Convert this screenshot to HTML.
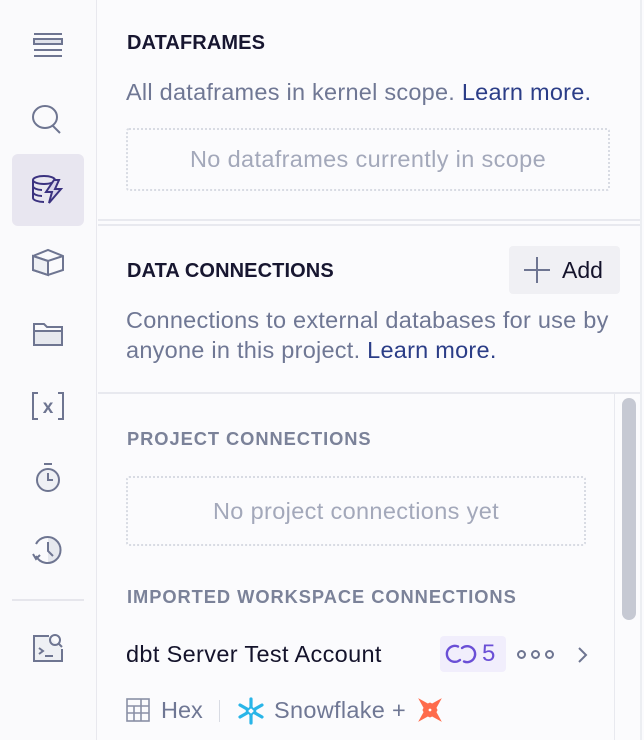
<!DOCTYPE html>
<html><head><meta charset="utf-8"><style>
*{box-sizing:border-box;margin:0;padding:0}
body{width:644px;height:740px;overflow:hidden;background:#fbfbfd;font-family:"Liberation Sans",sans-serif;position:relative}
.side{position:absolute;left:0;top:0;width:97px;height:740px;background:#fafafc;border-right:1px solid #e8e8ee}
.ic{position:absolute;left:12px;width:72px;height:72px;display:flex;align-items:center;justify-content:center}
.abs{position:absolute;white-space:nowrap}
.h{font-weight:bold;font-size:20px;color:#171630;letter-spacing:0.1px}
.t{font-size:23.5px;color:#6f7794;line-height:30px;letter-spacing:0.25px}
.t a{color:#2b3d87;text-decoration:none}
.box{border:2px dotted #d8dbe3;border-radius:3px;color:#a3a8ba;font-size:23.5px;letter-spacing:0.35px;display:flex;align-items:center;justify-content:center}
.sub{font-weight:bold;font-size:18.3px;color:#7b8299;letter-spacing:0.95px}
.line{position:absolute;left:98px;height:2px;background:#e8e9ef}
</style></head><body>
<div class="side">
 <div class="ic" style="top:10px"><svg width="34" height="34" viewBox="0 0 34 34" fill="none" stroke="#6e7591" stroke-width="2"><line x1="3" y1="5" x2="31" y2="5"/><rect x="3" y="10" width="28" height="5" fill="#e0e2ea"/><line x1="3" y1="21" x2="31" y2="21"/><line x1="3" y1="27" x2="31" y2="27"/></svg></div>
 <div class="ic" style="top:84px"><svg width="36" height="36" viewBox="0 0 36 36" fill="none" stroke="#6e7591" stroke-width="2"><ellipse cx="15" cy="15" rx="12" ry="11"/><line x1="23" y1="24" x2="30" y2="31"/></svg></div>
 <div class="ic" style="top:154px;background:#e8e6f0;border-radius:6px"><svg width="36" height="36" viewBox="0 0 36 36" fill="none" stroke="#3b3280" stroke-width="2"><ellipse cx="14" cy="8" rx="11" ry="4"/><path d="M3 8v18c0 2 5 4 11 4M3 14c0 2 4 4 9 4M3 20c0 2 4 4 9 4"/><path d="M24 8l-8 12h6l-3 11 12-14h-6l4-9z" fill="#d8d4ea"/></svg></div>
 <div class="ic" style="top:226px"><svg width="36" height="34" viewBox="0 0 36 34" fill="none" stroke="#6e7591" stroke-width="2"><path d="M3 11L18 5l15 6v14l-15 5-15-5z"/><path d="M3 11l15 5 15-5M18 16v14"/><path d="M3 11l15 5v14l-15-5z" fill="#eef0f4"/></svg></div>
 <div class="ic" style="top:298px"><svg width="34" height="30" viewBox="0 0 34 30" fill="none" stroke="#6e7591" stroke-width="2"><path d="M3 5h10l3 3h15v18H3z"/><rect x="3" y="12" width="28" height="14" fill="#e6e8ee"/></svg></div>
 <div class="ic" style="top:370px"><svg width="36" height="34" viewBox="0 0 36 34" fill="none" stroke="#6e7591" stroke-width="2"><path d="M8 4H3v26h5M28 4h5v26h-5"/><text x="18" y="24" font-family="Liberation Sans" font-weight="bold" font-size="19" fill="#6e7591" stroke="none" text-anchor="middle">x</text></svg></div>
 <div class="ic" style="top:442px"><svg width="34" height="34" viewBox="0 0 34 34" fill="none" stroke="#6e7591" stroke-width="2"><line x1="13" y1="3" x2="21" y2="3"/><circle cx="17" cy="19" r="11" fill="#eef0f4"/><path d="M17 12v7h5"/></svg></div>
 <div class="ic" style="top:514px"><svg width="36" height="36" viewBox="0 0 36 36" fill="none" stroke="#6e7591" stroke-width="2"><path d="M18 5a13 13 0 0 1 0 26z" fill="#e6e8ee" stroke="none"/><path d="M6 24A13 13 0 1 0 6 12"/><path d="M18 10v9l5 5"/><path d="M3 22l3 5 4-4"/></svg></div>
 <div style="position:absolute;left:12px;top:599px;width:72px;height:2px;background:#e6e6ec"></div>
 <div class="ic" style="top:612px"><svg width="34" height="34" viewBox="0 0 34 34" fill="none" stroke="#6e7591" stroke-width="2"><path d="M18 5H3v25h28V18" fill="#eef0f4"/><path d="M8 17l4 3-4 3M14 25h8"/><circle cx="24" cy="9" r="5"/><line x1="28" y1="13" x2="31" y2="16"/></svg></div>
</div>

<div class="abs" style="left:640px;top:0;width:2px;height:740px;background:#eceef2"></div>
<div class="abs h" style="left:127px;top:32px">DATAFRAMES</div>
<div class="abs t" style="left:126px;top:77px">All dataframes in kernel scope. <a>Learn more.</a></div>
<div class="abs box" style="left:126px;top:128px;width:484px;height:63px">No dataframes currently in scope</div>
<div class="line" style="top:219px;width:542px"></div>
<div class="line" style="top:224px;width:542px"></div>
<div class="abs h" style="left:127px;top:260px">DATA CONNECTIONS</div>
<div class="abs" style="left:509px;top:246px;width:111px;height:48px;background:#f0f0f4;border-radius:4px;font-size:23px;color:#14132b;display:flex;align-items:center;padding-left:14px"><svg width="28" height="28" viewBox="0 0 28 28" stroke="#6e7591" stroke-width="2"><line x1="14" y1="1" x2="14" y2="27"/><line x1="1" y1="14" x2="27" y2="14"/></svg><span style="margin-left:11px">Add</span></div>
<div class="abs t" style="left:126px;top:305px">Connections to external databases for use by<br>anyone in this project. <a>Learn more.</a></div>
<div class="line" style="top:392px;width:542px"></div>
<div class="abs" style="left:614px;top:393px;width:1px;height:347px;background:#e8e9ef"></div>
<div class="abs" style="left:622px;top:398px;width:14px;height:222px;background:#c6c9d3;border-radius:7px"></div>
<div class="abs sub" style="left:127px;top:428px">PROJECT CONNECTIONS</div>
<div class="abs box" style="left:126px;top:476px;width:460px;height:70px">No project connections yet</div>
<div class="abs sub" style="left:127px;top:586px">IMPORTED WORKSPACE CONNECTIONS</div>
<div class="abs" style="left:126px;top:641px;font-size:23.5px;letter-spacing:0.35px;color:#14132b">dbt Server Test Account</div>
<div class="abs" style="left:440px;top:636px;width:66px;height:36px;background:#f1eefc;border-radius:4px;display:flex;align-items:center;padding-left:5px;color:#6a4fd6;font-size:24px"><svg width="32" height="26" viewBox="0 0 32 26" fill="none" stroke="#6a4fd6" stroke-width="2.4" stroke-linecap="round"><path d="M13 5.5A8 8 0 1 0 15 19"/><path d="M19 20.5A8 8 0 1 0 17 7"/></svg><span style="margin-left:5px">5</span></div>
<div class="abs" style="left:517px;top:650px;display:flex;gap:5px"><span style="width:9px;height:9px;border:2px solid #6e7591;border-radius:50%"></span><span style="width:9px;height:9px;border:2px solid #6e7591;border-radius:50%"></span><span style="width:9px;height:9px;border:2px solid #6e7591;border-radius:50%"></span></div>
<svg class="abs" style="left:576px;top:645px" width="14" height="20" viewBox="0 0 14 20" fill="none" stroke="#6e7591" stroke-width="2"><path d="M3 3l7 7-7 7"/></svg>
<svg class="abs" style="left:126px;top:698px" width="24" height="24" viewBox="0 0 24 24" fill="none" stroke="#8a90a6" stroke-width="1.6"><rect x="1" y="1" width="22" height="22"/><path d="M1 8h22M1 15h22M8 8v15M15 1v22"/></svg>
<div class="abs" style="left:161px;top:697px;font-size:23.5px;color:#6f7794">Hex</div>
<div class="abs" style="left:219px;top:700px;width:1px;height:22px;background:#d8dbe3"></div>
<svg class="abs" style="left:236px;top:696px" width="30" height="30" viewBox="0 0 30 30" stroke="#29b5e8" stroke-width="3.2" stroke-linecap="round"><path d="M15 3v8M15 19v8M4 9l7 4M19 17l7 4M4 21l7-4M19 13l7-4"/><rect x="12" y="12" width="6" height="6" transform="rotate(45 15 15)" fill="none" stroke-width="2"/></svg>
<div class="abs" style="left:274px;top:697px;font-size:23.5px;letter-spacing:0.3px;color:#6f7794">Snowflake +</div>
<svg class="abs" style="left:416px;top:696px" width="28" height="28" viewBox="0 0 26 26"><path d="M2 2l9 5 2-1 2 1 9-5-5 9 1 2-1 2 5 9-9-5-2 1-2-1-9 5 5-9-1-2 1-2z" fill="#fe6b4c"/><circle cx="13" cy="13" r="1.3" fill="#fff"/></svg>
</body></html>
